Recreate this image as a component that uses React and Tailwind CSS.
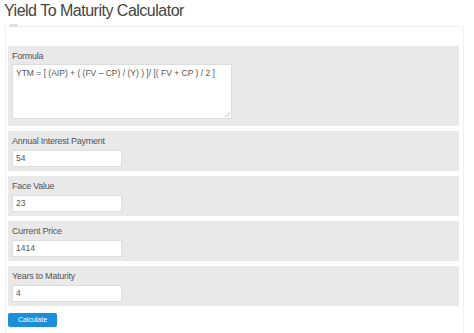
import React from "react";

function Field({ label, value }) {
  return (
    <div className="bg-[#e9e9e9] h-[40px] pt-[4px] pl-[4px] flex flex-col">
      <div className="text-[9px] leading-[13px] h-[13px] text-[#555] tracking-[-0.25px]">{label}</div>
      <div className="mt-[2px] w-[110px] h-[17px] bg-white border border-[#ddd] text-[8.5px] leading-[15px] pl-[3px] text-[#555]">
        {value}
      </div>
    </div>
  );
}

export default function App() {
  return (
    <div
      className="w-[474px] h-[333px] overflow-hidden bg-white"
      style={{ fontFamily: '"Liberation Sans", Arial, sans-serif' }}
    >
      <h1 className="text-[16px] leading-[22px] h-[22px] text-[#444] pl-[4px] font-normal tracking-[-0.5px]">
        Yield To Maturity Calculator
      </h1>
      <div className="relative mt-[4px] ml-[5px] w-[459px] h-[320px] border border-[#f0f0f0] pt-[19px] pl-[2px] pr-[4px]">
        <div className="absolute left-[3px] top-[-3px] w-[9px] h-[3px] rounded-full bg-[#e0e0e0]" />
        <div className="flex flex-col gap-[5px]">
          <div className="bg-[#e9e9e9] h-[80px] pt-[4px] pl-[4px]">
            <div className="text-[9px] leading-[13px] h-[14px] text-[#555] tracking-[-0.25px]">Formula</div>
            <div className="relative w-[220px] h-[55px] bg-white border border-[#ddd] text-[8.5px] leading-[14px] pl-[3px] pt-[1px] text-[#555] whitespace-nowrap">
              YTM = [ (AIP) + ( (FV – CP) / (Y) ) ]/ [( FV + CP ) / 2 ]
              <svg className="absolute right-[1px] bottom-[1px]" width="5" height="5" viewBox="0 0 5 5">
                <path d="M5 0 L0 5 M5 2.5 L2.5 5" stroke="#aaa" strokeWidth="0.7" />
              </svg>
            </div>
          </div>
          <Field label="Annual Interest Payment" value="54" />
          <Field label="Face Value" value="23" />
          <Field label="Current Price" value="1414" />
          <Field label="Years to Maturity" value="4" />
        </div>
        <button className="mt-[7px] w-[49px] h-[14px] rounded-[2px] bg-[#1a8fd8] text-white text-[7px] leading-[14px] block">
          Calculate
        </button>
      </div>
    </div>
  );
}
